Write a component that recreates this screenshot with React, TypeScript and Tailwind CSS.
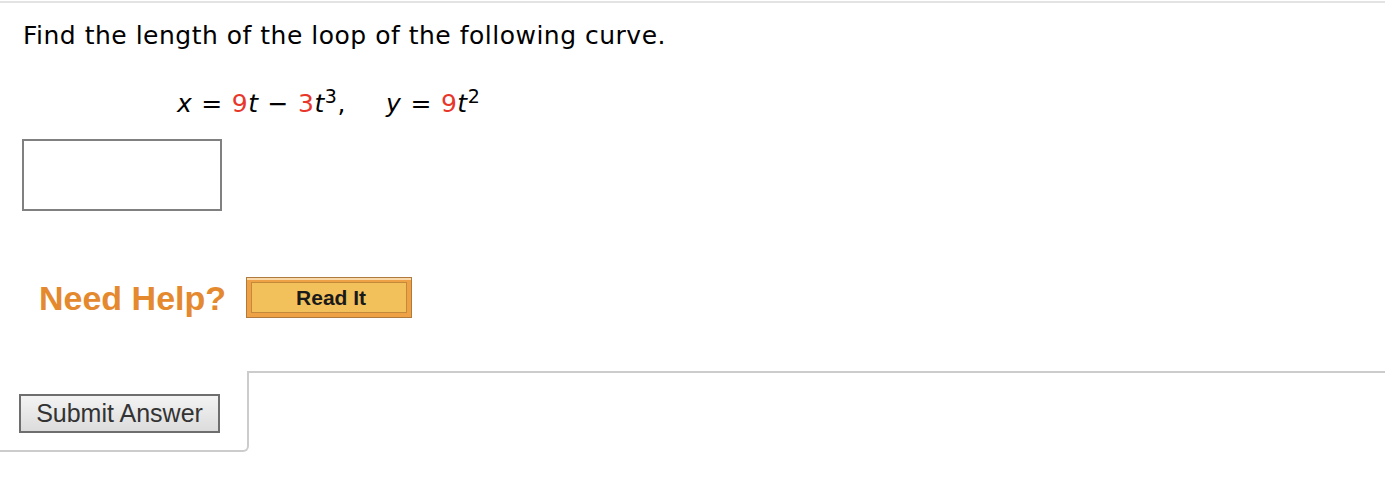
export default function App() {
  return (
    <div className="h-[495px] w-full overflow-hidden bg-white">
      {/* top rule */}
      <div className="mt-[1px] border-t-2 border-[#e3e3e3]" />

      {/* question */}
      <div className="px-[23px] pt-[19px] font-['DejaVu_Sans',Verdana,sans-serif] text-[25px] leading-[28px] tracking-[0.5px] text-black">
        <p>Find the length of the loop of the following curve.</p>

        <p className="mt-[40px] ml-[154px] whitespace-pre [word-spacing:0.6px]">
          <i>x</i> = <span className="text-[#e8372a]">9</span>
          <i>t</i> − <span className="text-[#e8372a]">3</span>
          <i>t</i>
          <sup className="text-[19px]">3</sup>,{"    "}
          <i className="ml-[4px]">y</i> = <span className="text-[#e8372a]">9</span>
          <i>t</i>
          <sup className="text-[19px]">2</sup>
        </p>

        {/* answer box */}
        <input
          type="text"
          className="mt-[21px] block h-[72px] w-[200px] -ml-[1px] border-2 border-[#808080] bg-white outline-none"
        />

        {/* need help */}
        <div className="mt-[66px] ml-[16px] flex h-[41px] items-center gap-[20px] tracking-normal">
          <span className="font-['Liberation_Sans',Arial,sans-serif] text-[34px] font-bold leading-none text-[#e5892f]">
            Need Help?
          </span>
          <button className="h-[41px] w-[166px] border border-[#b07a3e] bg-[#eea145] p-[4px] shadow-[inset_0_2px_0_#f9d9aa]">
            <div className="flex h-full w-full items-center justify-center border border-[#c38a3c] bg-[#f3c15b] pl-[4px] font-['Liberation_Sans',Arial,sans-serif] text-[21px] font-bold leading-none text-[#1a1a1a]">
              Read It
            </div>
          </button>
        </div>
      </div>

      {/* submit area */}
      <div className="mt-[53px] flex">
        <div className="h-[81px] w-[249px] rounded-br-[6px] border-r-2 border-b-2 border-[#cccccc] pl-[19px] pt-[23px]">
          <button className="h-[39px] w-[201px] border-2 border-[#6e6e6e] bg-gradient-to-b from-[#f3f3f3] to-[#dcdcdc] font-['Liberation_Sans',Arial,sans-serif] text-[25px] leading-none text-[#333333]">
            Submit Answer
          </button>
        </div>
        <div className="flex-1 border-t-2 border-[#cccccc]" />
      </div>
    </div>
  );
}
